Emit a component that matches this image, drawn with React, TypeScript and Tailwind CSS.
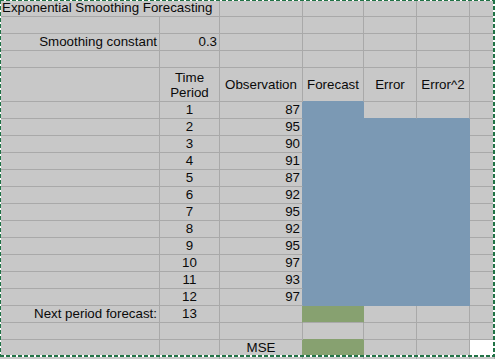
import React from "react";

type C = "g" | "b" | "n" | "w";

const R: Record<C, string> = {
  g: "border-r-[#a9a9a9]",
  b: "border-r-[#7b99b4]",
  n: "border-r-[#87a170]",
  w: "border-r-[#a9a9a9]",
};
const B: Record<C, string> = {
  g: "border-b-[#a9a9a9]",
  b: "border-b-[#7b99b4]",
  n: "border-b-[#87a170]",
  w: "border-b-[#a9a9a9]",
};
const BG: Record<C, string> = {
  g: "bg-[#c8c8c8]",
  b: "bg-[#7b99b4]",
  n: "bg-[#87a170]",
  w: "bg-white",
};

type CellDef = {
  text?: React.ReactNode;
  align?: "l" | "r" | "c";
  bg?: C;
  r?: C;
  b?: C;
  span?: boolean;
};

const ALIGN = {
  l: "justify-start pl-[2px]",
  r: "justify-end pr-[2px]",
  c: "justify-center",
};

function Cell({ d, tall }: { d: CellDef; tall?: boolean }) {
  const bg = d.bg ?? "g";
  return (
    <div
      className={[
        "flex border-r border-b whitespace-nowrap",
        tall ? "h-[34px] items-center text-center leading-[15px]" : "h-[17px] items-start leading-[16px]",
        d.span ? "col-span-2" : "",
        BG[bg],
        R[d.r ?? (bg === "w" ? "g" : bg)],
        B[d.b ?? (bg === "w" ? "g" : bg)],
        ALIGN[d.align ?? "l"],
      ].join(" ")}
    >
      {d.text}
    </div>
  );
}

const obs = [87, 95, 90, 91, 87, 92, 95, 92, 95, 97, 93, 97];

const empty = (n: number): CellDef[] => Array.from({ length: n }, () => ({}));

export default function App() {
  const rows: { cells: CellDef[]; tall?: boolean }[] = [];
  rows.push({
    cells: [{ text: "Exponential Smoothing Forecasting", span: true, align: "l" }, ...empty(5)],
  });
  rows.push({ cells: empty(7) });
  rows.push({
    cells: [
      { text: "Smoothing constant", align: "r" },
      { text: "0.3", align: "r" },
      ...empty(5),
    ],
  });
  rows.push({ cells: empty(7) });
  rows.push({
    tall: true,
    cells: [
      {},
      {
        text: (
          <span>
            Time
            <br />
            Period
          </span>
        ),
        align: "c",
      },
      { text: "Observation", align: "c" },
      { text: "Forecast", align: "c", b: "b" },
      { text: "Error", align: "c" },
      { text: "Error^2", align: "c" },
      {},
    ],
  });
  obs.forEach((o, i) => {
    const first = i === 0;
    rows.push({
      cells: [
        {},
        { text: String(i + 1), align: "c" },
        { text: String(o), align: "r", r: "b" },
        { bg: "b" },
        first ? { b: "b" } : { bg: "b" },
        first ? { b: "b" } : { bg: "b" },
        {},
      ],
    });
  });
  rows.push({
    cells: [
      { text: "Next period forecast:", align: "r" },
      { text: "13", align: "c" },
      { r: "n" },
      { bg: "n", b: "g" },
      {},
      {},
      {},
    ],
  });
  rows.push({ cells: [{}, {}, {}, { b: "n" }, {}, {}, {}] });
  rows.push({
    cells: [
      {},
      {},
      { text: "MSE", align: "c", r: "n" },
      { bg: "n", b: "g" },
      {},
      {},
      { bg: "w" },
    ],
  });
  rows.push({ cells: empty(7) });

  return (
    <div className="relative w-[495px] h-[359px] overflow-hidden bg-[#c8c8c8] font-['Liberation_Sans',Arial,sans-serif] text-[13.33px] text-[#0a0a0a]">
      <div className="grid grid-cols-[160px_60px_83px_61px_53px_53px_25px]">
        {rows.map((row, ri) =>
          row.cells.map((c, ci) => <Cell key={`${ri}-${ci}`} d={c} tall={row.tall} />)
        )}
      </div>
      <div className="pointer-events-none absolute left-0 top-0 w-[495px] h-[357px]">
        <div className="absolute left-0 top-0 w-full h-[1px] bg-[repeating-linear-gradient(90deg,#217346_0_4px,#ffffff_4px_6px)]" />
        <div className="absolute left-0 top-0 h-full w-[1px] bg-[repeating-linear-gradient(180deg,#217346_0_4px,#ffffff_4px_6px)]" />
        <div className="absolute right-0 top-0 h-full w-[2px] bg-[repeating-linear-gradient(180deg,#217346_0_4px,#ffffff_4px_6px)]" />
        <div className="absolute left-0 bottom-0 w-full h-[2px] bg-[repeating-linear-gradient(90deg,#217346_0_4px,#ffffff_4px_6px)]" />
      </div>
    </div>
  );
}
